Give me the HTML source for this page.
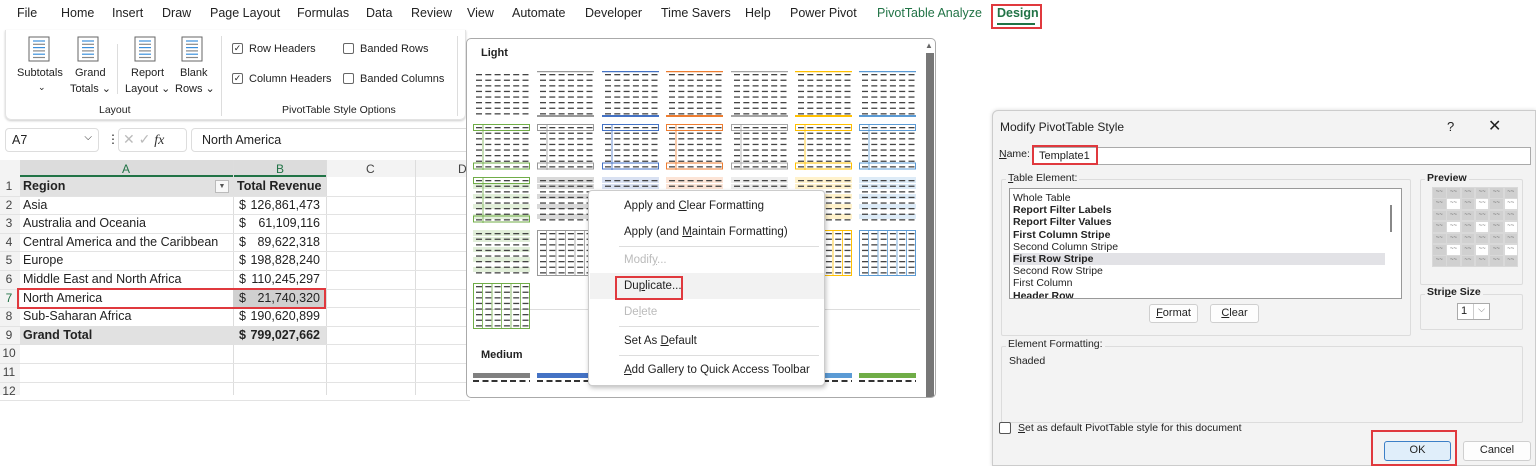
<!DOCTYPE html>
<html><head><meta charset="utf-8">
<style>
*{box-sizing:border-box;margin:0;padding:0}
body{width:1536px;height:466px;overflow:hidden;background:#fff;font-family:"Liberation Sans",sans-serif;font-size:12px;color:#222;position:relative}
.a{position:absolute;white-space:nowrap}
.tab{position:absolute;top:6px;font-size:12.5px;color:#222}
.red{position:absolute;border:2px solid #e0393e}
.cell{position:absolute;height:19px;line-height:19px;font-size:12.5px}
.hl{position:absolute;background:#e1e1e1}
.btn{position:absolute;background:#fdfdfd;border:1px solid #cfcfcf;border-radius:3px;text-align:center;font-size:11px;line-height:17px}
.grp{position:absolute;border:1px solid #dcdcdc;border-radius:2px}
.gl{position:absolute;background:#f3f3f3;font-size:10.5px;padding:0 2px;color:#222}
</style></head><body>

<div class="tab" style="left:17px">File</div>
<div class="tab" style="left:61px">Home</div>
<div class="tab" style="left:112px">Insert</div>
<div class="tab" style="left:162px">Draw</div>
<div class="tab" style="left:210px">Page Layout</div>
<div class="tab" style="left:297px">Formulas</div>
<div class="tab" style="left:366px">Data</div>
<div class="tab" style="left:411px">Review</div>
<div class="tab" style="left:467px">View</div>
<div class="tab" style="left:512px">Automate</div>
<div class="tab" style="left:585px">Developer</div>
<div class="tab" style="left:661px">Time Savers</div>
<div class="tab" style="left:745px">Help</div>
<div class="tab" style="left:790px">Power Pivot</div>
<div class="tab" style="left:877px;color:#217346">PivotTable Analyze</div>
<div class="tab" style="left:997px;color:#217346;font-weight:bold">Design</div>
<div class="a" style="left:997px;top:23px;width:38px;height:2px;background:#217346"></div>
<div class="red" style="left:991px;top:4px;width:51px;height:25px"></div>

<div class="a" style="left:5px;top:30px;width:461px;height:90px;border:1px solid #e3e3e3;border-top:none;border-radius:0 0 6px 6px;box-shadow:0 1px 2px #ccc"></div>
<div id="ribicons"></div>
<div class="a" style="left:17px;top:67px;font-size:11px">Subtotals</div>
<div class="a" style="left:38px;top:82px;font-size:9px">⌄</div>
<div class="a" style="left:75px;top:67px;font-size:11px">Grand</div>
<div class="a" style="left:70px;top:82px;font-size:11px">Totals ⌄</div>
<div class="a" style="left:117px;top:44px;width:1px;height:50px;background:#ddd"></div>
<div class="a" style="left:131px;top:67px;font-size:11px">Report</div>
<div class="a" style="left:125px;top:82px;font-size:11px">Layout ⌄</div>
<div class="a" style="left:180px;top:67px;font-size:11px">Blank</div>
<div class="a" style="left:175px;top:82px;font-size:11px">Rows ⌄</div>
<div class="a" style="left:99px;top:104px;font-size:10.5px">Layout</div>
<div class="a" style="left:221px;top:36px;width:1px;height:80px;background:#ddd"></div>
<div class="a" style="left:232px;top:43px;width:11px;height:11px;border:1px solid #666;border-radius:2px;font-size:9px;line-height:9px;text-align:center">✓</div>
<div class="a" style="left:249px;top:43px;font-size:11px">Row Headers</div>
<div class="a" style="left:232px;top:73px;width:11px;height:11px;border:1px solid #666;border-radius:2px;font-size:9px;line-height:9px;text-align:center">✓</div>
<div class="a" style="left:249px;top:73px;font-size:11px">Column Headers</div>
<div class="a" style="left:343px;top:43px;width:11px;height:11px;border:1px solid #666;border-radius:2px"></div>
<div class="a" style="left:360px;top:43px;font-size:11px">Banded Rows</div>
<div class="a" style="left:343px;top:73px;width:11px;height:11px;border:1px solid #666;border-radius:2px"></div>
<div class="a" style="left:360px;top:73px;font-size:11px">Banded Columns</div>
<div class="a" style="left:282px;top:104px;font-size:10.5px">PivotTable Style Options</div>
<div class="a" style="left:457px;top:36px;width:1px;height:80px;background:#ddd"></div>

<div class="a" style="left:5px;top:128px;width:94px;height:24px;border:1px solid #ddd;border-radius:4px;padding:4px 6px;font-size:12.5px">A7<span style="position:absolute;right:6px;top:3px;font-size:10px">⌵</span></div>
<div class="a" style="left:107px;top:132px;font-size:12px">⋮</div>
<div class="a" style="left:118px;top:128px;width:69px;height:24px;border:1px solid #ddd;border-radius:4px;color:#bbb;font-size:14px;padding:2px 4px">✕ ✓ <i style="color:#333;font-family:'Liberation Serif',serif">fx</i></div>
<div class="a" style="left:191px;top:128px;width:300px;height:24px;border:1px solid #ddd;border-radius:4px;padding:4px 10px;font-size:12.5px">North America</div>

<div class="a" style="left:0;top:160px;width:470px;height:17px;background:#f3f3f3"></div>
<div class="a" style="left:20px;top:160px;width:306px;height:17px;background:#dcdcdc;border-bottom:2px solid #217346"></div>
<div class="a" style="left:122px;top:162px;color:#217346;font-size:12px">A</div>
<div class="a" style="left:276px;top:162px;color:#217346;font-size:12px">B</div>
<div class="a" style="left:366px;top:162px;font-size:12px;color:#444">C</div>
<div class="a" style="left:458px;top:162px;font-size:12px;color:#444">D</div>
<div class="a" style="left:0;top:177px;width:20px;height:218px;background:#f3f3f3"></div>
<div class="a" style="left:233px;top:160px;width:1px;height:235px;background:#ddd"></div>
<div class="a" style="left:326px;top:160px;width:1px;height:235px;background:#ddd"></div>
<div class="a" style="left:415px;top:160px;width:1px;height:235px;background:#ddd"></div>
<div id="grid"></div>
<div class="hl" style="left:20px;top:177px;width:306px;height:19px"></div>
<div class="hl" style="left:20px;top:326px;width:306px;height:19px"></div>
<div class="hl" style="left:233px;top:289px;width:93px;height:19px;background:#d0d0d0"></div>
<div class="a" style="left:215px;top:180px;width:14px;height:13px;border:1px solid #bbb;background:#f8f8f8;font-size:7px;text-align:center;line-height:11px;color:#555">▼</div>
<div id="cells"></div>
<div class="red" style="left:17px;top:288px;width:309px;height:21px"></div>

<div class="a" style="left:466px;top:38px;width:470px;height:360px;border:1px solid #aaa;border-radius:5px;background:#fff;overflow:hidden">
 <div class="a" style="left:14px;top:8px;font-weight:bold;font-size:11px">Light</div>
 <div class="a" style="left:3px;top:270px;width:450px;height:1px;background:#ddd"></div>
 <div class="a" style="left:14px;top:310px;font-weight:bold;font-size:11px">Medium</div>
 <div class="a" style="left:459px;top:14px;width:8px;height:350px;background:#777"></div>
 <div class="a" style="left:458px;top:2px;font-size:8px;color:#666">▲</div>
 <div id="thumbs"></div>
</div>

<div class="a" style="left:588px;top:190px;width:237px;height:196px;background:#fff;border:1px solid #ccc;border-radius:4px;box-shadow:1px 2px 5px rgba(0,0,0,.25);font-size:11.5px">
 <div class="a" style="left:35px;top:9px">Apply and <u>C</u>lear Formatting</div>
 <div class="a" style="left:35px;top:35px">Apply (and <u>M</u>aintain Formatting)</div>
 <div class="a" style="left:30px;top:55px;width:200px;height:1px;background:#ddd"></div>
 <div class="a" style="left:35px;top:63px;color:#bbb">Modif<u>y</u>...</div>
 <div class="a" style="left:1px;top:82px;width:234px;height:26px;background:#f2f2f2"></div>
 <div class="a" style="left:35px;top:89px">Du<u>p</u>licate...</div>
 <div class="a" style="left:35px;top:115px;color:#bbb">De<u>l</u>ete</div>
 <div class="a" style="left:30px;top:135px;width:200px;height:1px;background:#ddd"></div>
 <div class="a" style="left:35px;top:144px">Set As <u>D</u>efault</div>
 <div class="a" style="left:30px;top:164px;width:200px;height:1px;background:#ddd"></div>
 <div class="a" style="left:35px;top:173px"><u>A</u>dd Gallery to Quick Access Toolbar</div>
</div>
<div class="red" style="left:615px;top:276px;width:68px;height:24px"></div>

<div class="a" style="left:992px;top:110px;width:544px;height:356px;background:#f3f3f3;border:1px solid #ccc;border-radius:6px 0 0 0;box-shadow:0 0 4px rgba(0,0,0,.15)">
 <div class="a" style="left:7px;top:9px;font-size:12px">Modify PivotTable Style</div>
 <div class="a" style="left:454px;top:8px;font-size:13px">?</div>
 <div class="a" style="left:495px;top:5px;font-size:16px">✕</div>
 <div class="a" style="left:6px;top:37px;font-size:10.5px"><u>N</u>ame:</div>
 <div class="a" style="left:40px;top:36px;width:498px;height:18px;background:#fff;border:1px solid #aaa;font-size:11px;padding:2px 5px">Template1</div>
 <div class="grp" style="left:8px;top:68px;width:410px;height:157px"></div>
 <div class="gl" style="left:13px;top:61px"><u>T</u>able Element:</div>
 <div class="a" style="left:16px;top:77px;width:393px;height:111px;background:#fff;border:1px solid #999;font-size:10.5px;line-height:12.2px;padding:3px 3px;overflow:hidden">
  <div>Whole Table</div><div><b>Report Filter Labels</b></div><div><b>Report Filter Values</b></div><div><b>First Column Stripe</b></div><div>Second Column Stripe</div><div style="background:#e2e2e6;width:372px"><b>First Row Stripe</b></div><div>Second Row Stripe</div><div>First Column</div><div><b>Header Row</b></div>
  <div class="a" style="left:380px;top:16px;width:2px;height:27px;background:#888"></div>
 </div>
 <div class="btn" style="left:156px;top:193px;width:49px;height:19px"><u>F</u>ormat</div>
 <div class="btn" style="left:217px;top:193px;width:49px;height:19px"><u>C</u>lear</div>
 <div class="grp" style="left:427px;top:68px;width:103px;height:106px"></div>
 <div class="gl" style="left:432px;top:61px;font-weight:bold">Preview</div>
 <div id="prev" class="a" style="left:439px;top:76px;width:86px;height:80px;background:#d9d9d9"></div>
 <div class="grp" style="left:427px;top:183px;width:103px;height:36px"></div>
 <div class="gl" style="left:432px;top:175px;font-weight:bold">Stri<u>p</u>e Size</div>
 <div class="a" style="left:464px;top:192px;width:33px;height:17px;background:#fff;border:1px solid #aaa;font-size:11px;padding:1px 3px">1<span style="position:absolute;left:15px;top:0;width:16px;height:15px;border-left:1px solid #ccc;font-size:9px;text-align:center;color:#777">⌵</span></div>
 <div class="grp" style="left:8px;top:235px;width:522px;height:77px"></div>
 <div class="gl" style="left:13px;top:227px">Element Formatting:</div>
 <div class="a" style="left:16px;top:244px;font-size:10.5px">Shaded</div>
 <div class="a" style="left:6px;top:311px;width:12px;height:12px;border:1px solid #555;border-radius:2px;background:#fff"></div>
 <div class="a" style="left:25px;top:311px;font-size:10.5px"><u>S</u>et as default PivotTable style for this document</div>
 <div class="btn" style="left:391px;top:330px;width:67px;height:20px;background:#e0eefa;border:1px solid #3c7fc7;font-size:11px">OK</div>
 <div class="btn" style="left:470px;top:330px;width:68px;height:20px;font-size:11px">Cancel</div>
</div>
<div class="red" style="left:1371px;top:430px;width:86px;height:36px"></div>
<div class="red" style="left:1032px;top:145px;width:66px;height:20px"></div>

<script>
var ri='';[[28,36],[77,36],[134,36],[181,36]].forEach(function(p){
 ri+='<svg class="a" style="left:'+p[0]+'px;top:'+p[1]+'px" width="22" height="26"><rect x="1" y="1" width="20" height="24" fill="#fff" stroke="#666"/>';
 for(var i=0;i<6;i++)ri+='<line x1="5" x2="17" y1="'+(5+i*3.3)+'" y2="'+(5+i*3.3)+'" stroke="'+(i%2?'#888':'#3a8fdc')+'" stroke-width="1.2"/>';
 ri+='</svg>';});
document.getElementById('ribicons').innerHTML=ri;
var g='',c='';
for(var r=0;r<12;r++){var y=177+r*18.6;
 g+='<div class="a" style="left:0;top:'+(y+18.6)+'px;width:470px;height:1px;background:#e3e3e3"></div>';
 g+='<div class="a" style="left:0;top:'+(y+2)+'px;width:18px;text-align:center;font-size:12px;color:'+(r==6?'#217346':'#444')+'">'+(r+1)+'</div>';}
document.getElementById('grid').innerHTML=g;
var rows=[['Region','Total Revenue',1],['Asia','$  126,861,473'],['Australia and Oceania','$     61,109,116'],['Central America and the Caribbean','$     89,622,318'],['Europe','$  198,828,240'],['Middle East and North Africa','$  110,245,297'],['North America','$     21,740,320'],['Sub-Saharan Africa','$  190,620,899'],['Grand Total','$  799,027,662',1]];
rows.forEach(function(d,i){var y=177+i*18.6;var w=d[2]?'bold':'normal';
 c+='<div class="cell" style="left:23px;top:'+y+'px;font-weight:'+w+'">'+d[0]+'</div>';
 if(i==0)c+='<div class="cell" style="left:237px;top:'+y+'px;font-weight:bold">'+d[1]+'</div>';
 else c+='<div class="cell" style="left:239px;top:'+y+'px;font-weight:'+w+'">$</div><div class="cell" style="left:250px;width:70px;text-align:right;top:'+y+'px;font-weight:'+w+'">'+d[1].replace(/\$\s*/,'')+'</div>';});
document.getElementById('cells').innerHTML=c;
var cols=['#555','#999','#4472c4','#ed7d31','#a5a5a5','#ffc000','#5b9bd5'];
var light=['#eee','#d9d9d9','#d9e1f2','#fce4d6','#ededed','#fff2cc','#ddebf7'];
var t='';
function thumb(x,y,col,lt,type){
 var s='<svg class="a" style="left:'+x+'px;top:'+y+'px" width="57" height="46">';
 if(type==2||type==3){for(var k=0;k<4;k++)s+='<rect x="0" y="'+(7+k*10)+'" width="57" height="5" fill="'+lt+'"/>';}
 if(type==3)s+='<rect x="0" y="0" width="57" height="6" fill="'+lt+'"/>';
 for(var r=0;r<8;r++)for(var q=0;q<6;q++)s+='<rect x="'+(3+q*9.3)+'" y="'+(3+r*5.6)+'" width="6" height="1.3" fill="#444"/>';
 if(type==0&&col!='#555'){s+='<line x1="0" x2="57" y1="0.5" y2="0.5" stroke="'+col+'" stroke-width="1.5"/><line x1="0" x2="57" y1="45" y2="45" stroke="'+col+'" stroke-width="2"/>';}
 if(type==1||type==2){s+='<rect x="0.5" y="0.5" width="56" height="6" fill="none" stroke="'+col+'"/><rect x="0.5" y="39" width="56" height="6" fill="none" stroke="'+col+'"/><line x1="10" x2="10" y1="0" y2="46" stroke="'+col+'" stroke-width="0.8"/>';}
 if(type==4){s+='<rect x="0.5" y="0.5" width="56" height="45" fill="none" stroke="'+col+'"/>';for(var q=1;q<6;q++)s+='<line x1="'+(q*9.5)+'" x2="'+(q*9.5)+'" y1="0" y2="46" stroke="'+col+'" stroke-width="0.8"/>';}
 return s+'</svg>';}
var X0=6,dx=64.4,ys=[32,85,138,191,244];
for(var i=0;i<7;i++){
 t+=thumb(X0+i*dx,ys[0],cols[i],light[i],0);
 t+=thumb(X0+i*dx,ys[1],i==0?'#70ad47':cols[i],i==0?'#e2efda':light[i],1);
 t+=thumb(X0+i*dx,ys[2],i==0?'#70ad47':cols[i],i==0?'#e2efda':light[i],i==0?2:3);
 t+=thumb(X0+i*dx,ys[3],i==0?'#a9d08e':cols[i],i==0?'#e2efda':light[i],i==0?3:4);}
t+=thumb(X0,ys[4],'#70ad47','#e2efda',4);
var mc=['#808080','#4472c4','#ed7d31','#a5a5a5','#ffc000','#5b9bd5','#70ad47'];
for(var i=0;i<7;i++)t+='<div class="a" style="left:'+(X0+i*dx)+'px;top:334px;width:57px;height:5px;background:'+mc[i]+'"></div><div class="a" style="left:'+(X0+i*dx)+'px;top:341px;width:57px;height:2px;background:repeating-linear-gradient(90deg,#333 0 6px,transparent 6px 9.3px)"></div>';
document.getElementById('thumbs').innerHTML=t;
var p='';for(var r=0;r<7;r++)for(var q=0;q<6;q++){var w=(r%2==1&&q%2==1);
 p+='<div class="a" style="left:'+(q*14.3+1)+'px;top:'+(r*11.4+1)+'px;width:12.5px;height:9.5px;background:'+(w?'#fff':'#d0d0d0')+';font-size:6px;line-height:9px;text-align:center;color:#666">~~</div>';}
document.getElementById('prev').innerHTML=p;
</script>
</body></html>
